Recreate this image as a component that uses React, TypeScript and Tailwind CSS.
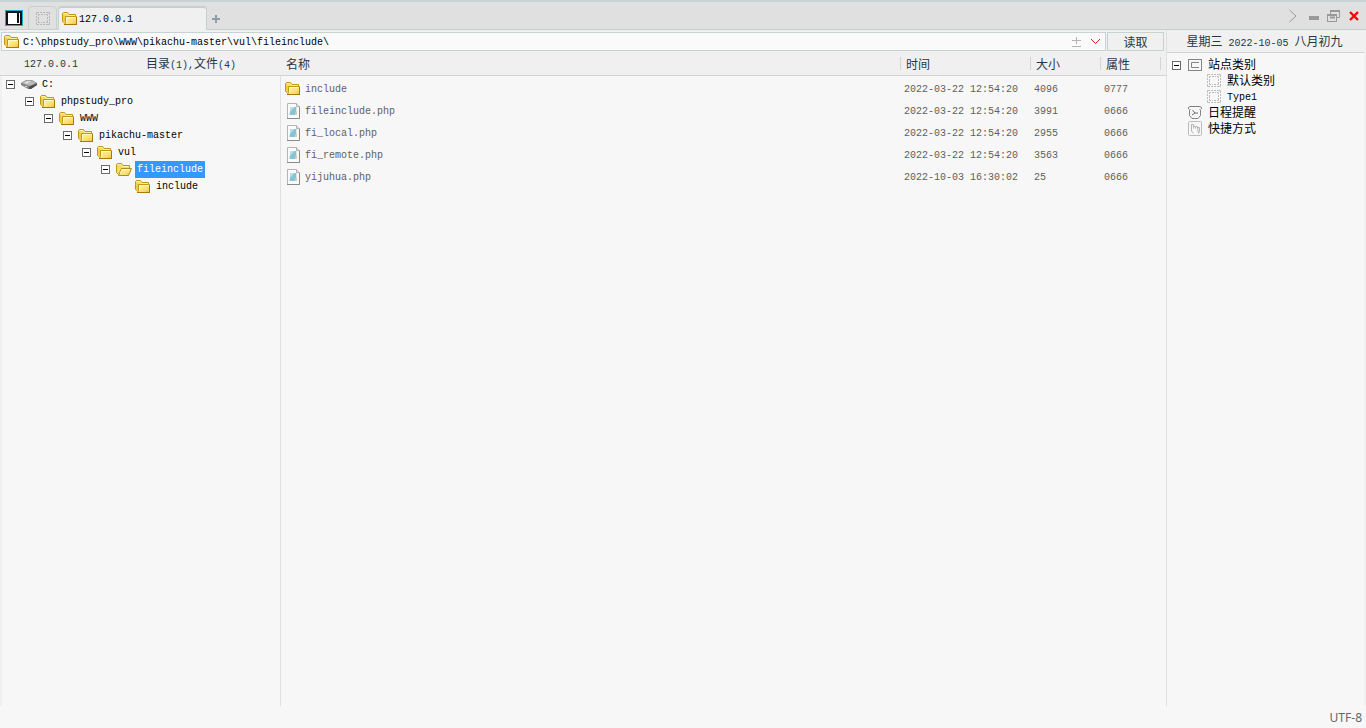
import type { ReactNode } from "react";

const MONO = "font-['Liberation_Mono','Noto_Sans_CJK_SC',monospace]";

function Label({ text }: { text: string }) {
  const runs = text.match(/[\u4e00-\u9fff]+|[^\u4e00-\u9fff]+/g) ?? [];
  return (
    <span className="whitespace-pre">
      {runs.map((run, i) => (
        <span
          key={i}
          className={
            /[\u4e00-\u9fff]/.test(run)
              ? "font-['Noto_Sans_CJK_SC',sans-serif] text-[12px]"
              : "font-['Liberation_Mono',monospace] text-[10px]"
          }
        >
          {run}
        </span>
      ))}
    </span>
  );
}

function FolderIcon({ open = false }: { open?: boolean }) {
  return (
    <svg width="16" height="16" viewBox="0 0 16 16" className="shrink-0" aria-hidden="true">
      <defs>
        <linearGradient id="folderFront" x1="0" y1="0" x2="1" y2="1">
          <stop offset="0" stopColor="#fff7a8" />
          <stop offset="0.6" stopColor="#fbe173" />
          <stop offset="1" stopColor="#eec244" />
        </linearGradient>
      </defs>
      <path d="M2.5 12.5 L0.5 10.5 V2.5 L1.5 1.5 H5.5 L7 3.5 H13.5 V6" fill="#f7dc62" stroke="#c3961a" />
      <path d="M2 2.5 H5 L6.5 4.5 H13" fill="none" stroke="#fff3a0" />
      {open ? (
        <>
          <path d="M2.5 13.5 L5.5 6.5 H15.5 L12.5 13.5 Z" fill="url(#folderFront)" stroke="#b98a12" />
          <path d="M4.5 11 L6 7.5 H14" fill="none" stroke="#fffbd0" />
        </>
      ) : (
        <>
          <path d="M1 11 V4 L3 5 V13 Z" fill="#efcb4c" />
          <path d="M2.5 13.5 L3.5 11.5 V5.5 H14.5 V13.5 Z" fill="url(#folderFront)" stroke="#c3961a" />
          <path d="M4.5 11.5 V6.5 H13.5" fill="none" stroke="#fffbd0" />
          <path d="M2 13.5 H15 M14.5 6 V14" stroke="#a97908" />
        </>
      )}
    </svg>
  );
}

function DriveIcon() {
  return (
    <svg width="16" height="16" viewBox="0 0 16 16" className="shrink-0" aria-hidden="true">
      <path d="M0 6 L5 3 H11 L16 6 V8 L10 12 H7 L0 8 Z" fill="#858585" />
      <path d="M1 6 L5 3.5 H11 L15 6 L9 9 Z" fill="#b9b9b9" />
      <path d="M3 6 L6 4 H10 L6 7 Z" fill="#dcdcdc" />
      <path d="M8 9.5 L16 6.5 V8 L10 12 H8 Z" fill="#4c4c4c" />
      <path d="M4 9.5 H6" stroke="#ddd" />
    </svg>
  );
}

function FileIcon() {
  return (
    <svg width="16" height="16" viewBox="0 0 16 16" className="shrink-0" aria-hidden="true">
      <path d="M2.5 0.5 H11.5 L14.5 3.5 V15.5 H2.5 Z" fill="#fbfbfb" stroke="#b4b4b4" />
      <path d="M14.5 4 V15.5 H2" fill="none" stroke="#8a8a8a" />
      <path d="M11.5 0.5 V3.5 H14.5" fill="#e4e4e4" stroke="#b0b0b0" />
      <path d="M5.5 4 H11.5 L10.5 12 H4.5 Z" fill="#85c4d4" />
      <path d="M5.5 4 H9.5 L5 9 Z" fill="#b9e0e8" />
      <path d="M10.5 12 L12 5 V12 Z" fill="#dccba6" />
    </svg>
  );
}

function DashedIcon({ color = "#bdbdbd" }: { color?: string }) {
  return (
    <svg width="16" height="16" viewBox="0 0 16 16" className="shrink-0" aria-hidden="true">
      <path
        d="M1.5 4 V1.5 H4 M5 1.5 H7 M8 1.5 H10 M11 1.5 H14.5 V4 M14.5 5 V7 M14.5 8 V10 M14.5 11 V13.5 H11 M10 13.5 H8 M7 13.5 H5 M4 13.5 H1.5 V11 M1.5 10 V8 M1.5 7 V5"
        fill="none"
        stroke={color}
      />
      <path
        d="M3.5 5 V3.5 H5 M6 3.5 H8 M9 3.5 H10 M11 3.5 H12.5 V5 M12.5 6 V8 M12.5 9 V11.5 H11 M10 11.5 H8 M7 11.5 H6 M5 11.5 H3.5 V10 M3.5 9 V6"
        fill="none"
        stroke={color}
      />
    </svg>
  );
}

function SiteIcon() {
  return (
    <svg width="16" height="16" viewBox="0 0 16 16" className="shrink-0" aria-hidden="true">
      <rect x="1.5" y="2.5" width="13" height="11" fill="none" stroke="#858585" />
      <path d="M12 5.5 H4.5 V10.5 H12" fill="none" stroke="#858585" />
    </svg>
  );
}

function ClockIcon() {
  return (
    <svg width="16" height="16" viewBox="0 0 16 16" className="shrink-0" aria-hidden="true">
      <path d="M1.5 4 V2.5 L3 1.5 H13 L14.5 2.5 V4" fill="none" stroke="#7d7d7d" />
      <path d="M3.5 4 L2.5 5 V10.5 L5 13.5 H11 L13.5 10.5 V5 L12.5 4" fill="none" stroke="#858585" />
      <path d="M5.5 5 L8 8 H11 M8 8 L5 10" fill="none" stroke="#6e6e6e" />
    </svg>
  );
}

function HandIcon() {
  return (
    <svg width="16" height="16" viewBox="0 0 16 16" className="shrink-0" aria-hidden="true">
      <rect x="1.5" y="0.5" width="13" height="14" rx="1" fill="none" stroke="#bcbcbc" />
      <path
        d="M6.5 12.5 L4.5 10 V3.5 H6.5 V7.5 M6.5 5.5 H8.5 V7.5 M8.5 5.5 H10.5 V7.5 M10.5 6.5 H12.5 V10 L11.5 12.5 Z"
        fill="none"
        stroke="#b5b5b5"
      />
    </svg>
  );
}

interface NodeProps {
  level: number;
  icon: ReactNode;
  text: string;
  expander?: boolean;
  selected?: boolean;
  rowClass: string;
}

function TreeNode({ level, icon, text, expander, selected, rowClass }: NodeProps) {
  return (
    <li
      role="treeitem"
      aria-level={level + 1}
      aria-selected={!!selected}
      className={`flex items-center ${rowClass}`}
      style={{ paddingLeft: level * 19 }}
    >
      {expander ? (
        <button type="button" aria-label={`Collapse ${text}`} className="mr-1.5 shrink-0">
          <svg width="9" height="9" viewBox="0 0 9 9" className="block">
            <rect x="0.5" y="0.5" width="8" height="8" fill="#fff" stroke="#6b6b6b" />
            <path d="M2 4.5 H7" stroke="#000" />
          </svg>
        </button>
      ) : (
        <span className="mr-1.5 w-[9px] shrink-0" />
      )}
      {icon}
      <span
        className={`ml-[3px] flex h-full items-center px-0.5 ${selected ? "bg-[#3399ff] text-white" : "text-black"}`}
      >
        <Label text={text} />
      </span>
    </li>
  );
}

const folders = [
  { text: "C:", icon: <DriveIcon />, expander: true },
  { text: "phpstudy_pro", icon: <FolderIcon />, expander: true },
  { text: "WWW", icon: <FolderIcon />, expander: true },
  { text: "pikachu-master", icon: <FolderIcon />, expander: true },
  { text: "vul", icon: <FolderIcon />, expander: true },
  { text: "fileinclude", icon: <FolderIcon open />, expander: true, selected: true },
  { text: "include", icon: <FolderIcon /> },
];

const files = [
  { name: "include", time: "2022-03-22 12:54:20", size: "4096", attr: "0777", dir: true },
  { name: "fileinclude.php", time: "2022-03-22 12:54:20", size: "3991", attr: "0666" },
  { name: "fi_local.php", time: "2022-03-22 12:54:20", size: "2955", attr: "0666" },
  { name: "fi_remote.php", time: "2022-03-22 12:54:20", size: "3563", attr: "0666" },
  { name: "yijuhua.php", time: "2022-10-03 16:30:02", size: "25", attr: "0666" },
];

const sites = [
  { level: 0, text: "站点类别", icon: <SiteIcon />, expander: true },
  { level: 1, text: "默认类别", icon: <DashedIcon /> },
  { level: 1, text: "Type1", icon: <DashedIcon /> },
  { level: 0, text: "日程提醒", icon: <ClockIcon /> },
  { level: 0, text: "快捷方式", icon: <HandIcon /> },
];

function TabBar() {
  return (
    <header className="flex h-[30px] shrink-0 items-end border-t-2 border-[#c8d4d4] bg-[#e0e0e0]">
      <div className="flex h-full w-7 items-end border-b border-[#c5d1d1] pb-[3px] pl-[5px]">
        <button type="button" aria-label="Toggle panel">
          <svg width="18" height="16" viewBox="0 0 18 16" className="block">
            <rect width="18" height="16" fill="#1badc9" />
            <rect x="1" y="1" width="16" height="14" fill="#111" />
            <rect x="3" y="3" width="12" height="11" fill="#fff" />
            <rect x="12" y="3" width="2" height="10" fill="#111" />
          </svg>
        </button>
      </div>
      <button
        type="button"
        aria-label="Sites"
        className="flex h-6 w-[29px] items-center justify-center rounded-t-sm border border-[#c5d1d1] pt-0.5"
      >
        <DashedIcon color="#b8b8b8" />
      </button>
      <div className="h-6 w-px border-b border-[#c5d1d1]" />
      <button
        type="button"
        className="flex h-6 w-[149px] items-center gap-px rounded-t-sm border-x border-t-2 border-[#c5d1d1] bg-[#f0f0f0] pl-[3px]"
      >
        <FolderIcon />
        <Label text="127.0.0.1" />
      </button>
      <div className="flex h-full flex-1 items-center justify-between border-b border-[#c5d1d1] pr-[7px] pl-1">
        <button type="button" aria-label="New tab" className="pt-1.5">
          <svg width="10" height="10" viewBox="0 0 10 10" className="block">
            <path d="M1 5 H9 M5 1 V9" stroke="#8c9ea8" strokeWidth="2" />
          </svg>
        </button>
        <div className="flex items-center gap-3">
          <button type="button" aria-label="Next">
            <svg width="8" height="14" viewBox="0 0 8 14" className="block">
              <path d="M0.5 1 L7 7 L0.5 13" fill="none" stroke="#999" />
            </svg>
          </button>
          <button type="button" aria-label="Minimize">
            <svg width="11" height="12" viewBox="0 0 11 12" className="block">
              <rect y="6" width="10" height="4" fill="#999" />
            </svg>
          </button>
          <button type="button" aria-label="Restore" className="-ml-[5px]">
            <svg width="13" height="12" viewBox="0 0 13 12" className="block">
              <path d="M3.5 4 V0.5 H12.5 V7.5 H10" fill="none" stroke="#999" />
              <path d="M3 1 H13" stroke="#999" strokeWidth="2" />
              <rect x="0.5" y="4.5" width="9" height="7" fill="#e0e0e0" stroke="#999" />
              <path d="M0 5 H10 M3 7.5 H8" stroke="#999" strokeWidth="2" />
            </svg>
          </button>
          <button type="button" aria-label="Close" className="-ml-[3px]">
            <svg width="10" height="10" viewBox="0 0 10 10" className="block">
              <path d="M1 1 L9 9 M9 1 L1 9" stroke="#f00" strokeWidth="2.4" />
            </svg>
          </button>
        </div>
      </div>
    </header>
  );
}

function AddressBar() {
  return (
    <form className="flex h-[21px] shrink-0 gap-px pt-0.5 pr-0.5 pl-px" onSubmit={(e) => e.preventDefault()}>
      <div className="flex flex-1 items-center border border-[#c5d3d3] bg-[#fafafa] pr-1 pl-0.5">
        <FolderIcon />
        <input
          aria-label="Path"
          defaultValue="C:\phpstudy_pro\WWW\pikachu-master\vul\fileinclude\"
          className={`${MONO} ml-[3px] h-[17px] min-w-0 flex-1 bg-transparent pt-px text-[10px] text-black outline-none`}
        />
        <button type="button" aria-label="Bookmark path" className="mr-2">
          <svg width="11" height="11" viewBox="0 0 11 11" className="block">
            <path d="M1 4.5 H10 M5.5 1 V8 M1 10.5 H10" stroke="#b4b4b4" />
          </svg>
        </button>
        <button type="button" aria-label="Path history">
          <svg width="11" height="7" viewBox="0 0 11 7" className="block">
            <path d="M1 1 L5.5 5.5 L10 1" fill="none" stroke="#d42020" />
          </svg>
        </button>
      </div>
      <button
        type="submit"
        className="flex w-[57px] items-center justify-center border border-[#c5d3d3] bg-[#f0f0f0] pt-0.5 text-[#2b3645]"
      >
        <Label text="读取" />
      </button>
    </form>
  );
}

function HeaderCell({ text }: { text: string }) {
  return (
    <th className="h-6 border-b border-[#d0d4d4] bg-[#f0f0f0] p-0 text-left font-normal">
      <div className="flex h-[13px] items-center border-r border-[#d4d4d4] pt-[3px] pl-[5px]">
        <Label text={text} />
      </div>
    </th>
  );
}

export default function App() {
  return (
    <div
      className={`${MONO} flex h-screen min-h-[320px] flex-col overflow-hidden bg-[#f7f7f7] text-[12px] leading-4 text-black [&_button]:cursor-default`}
    >
      <TabBar />
      <div className="flex min-h-0 flex-1">
        <main className="flex min-w-0 flex-1 flex-col">
          <div className="bg-[#f0f0f0]">
            <AddressBar />
          </div>
          <div className="flex min-h-0 flex-1">
            <section className="flex w-[281px] shrink-0 flex-col">
              <div className="flex h-[25px] shrink-0 items-center border-b border-[#d0d4d4] bg-[#f0f0f0] pt-[3px] pl-6 text-[#2b3645]">
                <span className="w-[122px]">
                  <Label text="127.0.0.1" />
                </span>
                <Label text="目录(1),文件(4)" />
              </div>
              <ul
                role="tree"
                aria-label="Folders"
                className="flex-1 border-r border-l-2 border-r-[#e0e0e0] border-l-[#f0f0f0] pl-1"
              >
                {folders.map((f, i) => (
                  <TreeNode key={i} level={i} rowClass="h-[17px]" {...f} />
                ))}
              </ul>
            </section>
            <section className="min-w-0 flex-1">
              <table className="w-full table-fixed border-separate border-spacing-0">
                <colgroup>
                  <col />
                  <col className="w-[130px]" />
                  <col className="w-[70px]" />
                  <col className="w-[60px]" />
                  <col className="w-[5px]" />
                </colgroup>
                <thead className="text-[#2b3645]">
                  <tr className="h-[25px]">
                    <HeaderCell text="名称" />
                    <HeaderCell text="时间" />
                    <HeaderCell text="大小" />
                    <HeaderCell text="属性" />
                    <td className="border-b border-[#d0d4d4] bg-[#f0f0f0]" />
                  </tr>
                </thead>
                <tbody className="text-[#606060]">
                  <tr className="h-0.5">
                    <td colSpan={5} className="p-0" />
                  </tr>
                  {files.map((f) => (
                    <tr key={f.name} className="h-[22px]">
                      <td className="p-0">
                        <div className="flex items-center gap-1 pl-1">
                          {f.dir ? <FolderIcon /> : <FileIcon />}
                          <Label text={f.name} />
                        </div>
                      </td>
                      <td className="p-0 pl-[3px]">
                        <Label text={f.time} />
                      </td>
                      <td className="p-0 pl-[3px]">
                        <Label text={f.size} />
                      </td>
                      <td className="p-0 pl-[3px]">
                        <Label text={f.attr} />
                      </td>
                      <td className="p-0" />
                    </tr>
                  ))}
                </tbody>
              </table>
            </section>
          </div>
        </main>
        <aside className="w-[200px] shrink-0 border-r-2 border-l border-r-[#f0f0f0] border-l-[#e0e0e0]">
          <div className="flex h-[23px] items-center justify-center border-b border-[#d0d4d4] bg-[#f0f0f0] pt-0.5 pr-0.5 text-[#2b3645]">
            <Label text="星期三 2022-10-05 八月初九" />
          </div>
          <ul role="tree" aria-label="Sites" className="pt-1 pl-[5px]">
            {sites.map((s, i) => (
              <TreeNode key={i} rowClass="h-4" {...s} />
            ))}
          </ul>
        </aside>
      </div>
      <footer className="flex h-[22px] shrink-0 items-center justify-end pt-px pr-1 font-['Noto_Sans',sans-serif] text-[12px] text-[#666]">
        UTF-8
      </footer>
    </div>
  );
}
